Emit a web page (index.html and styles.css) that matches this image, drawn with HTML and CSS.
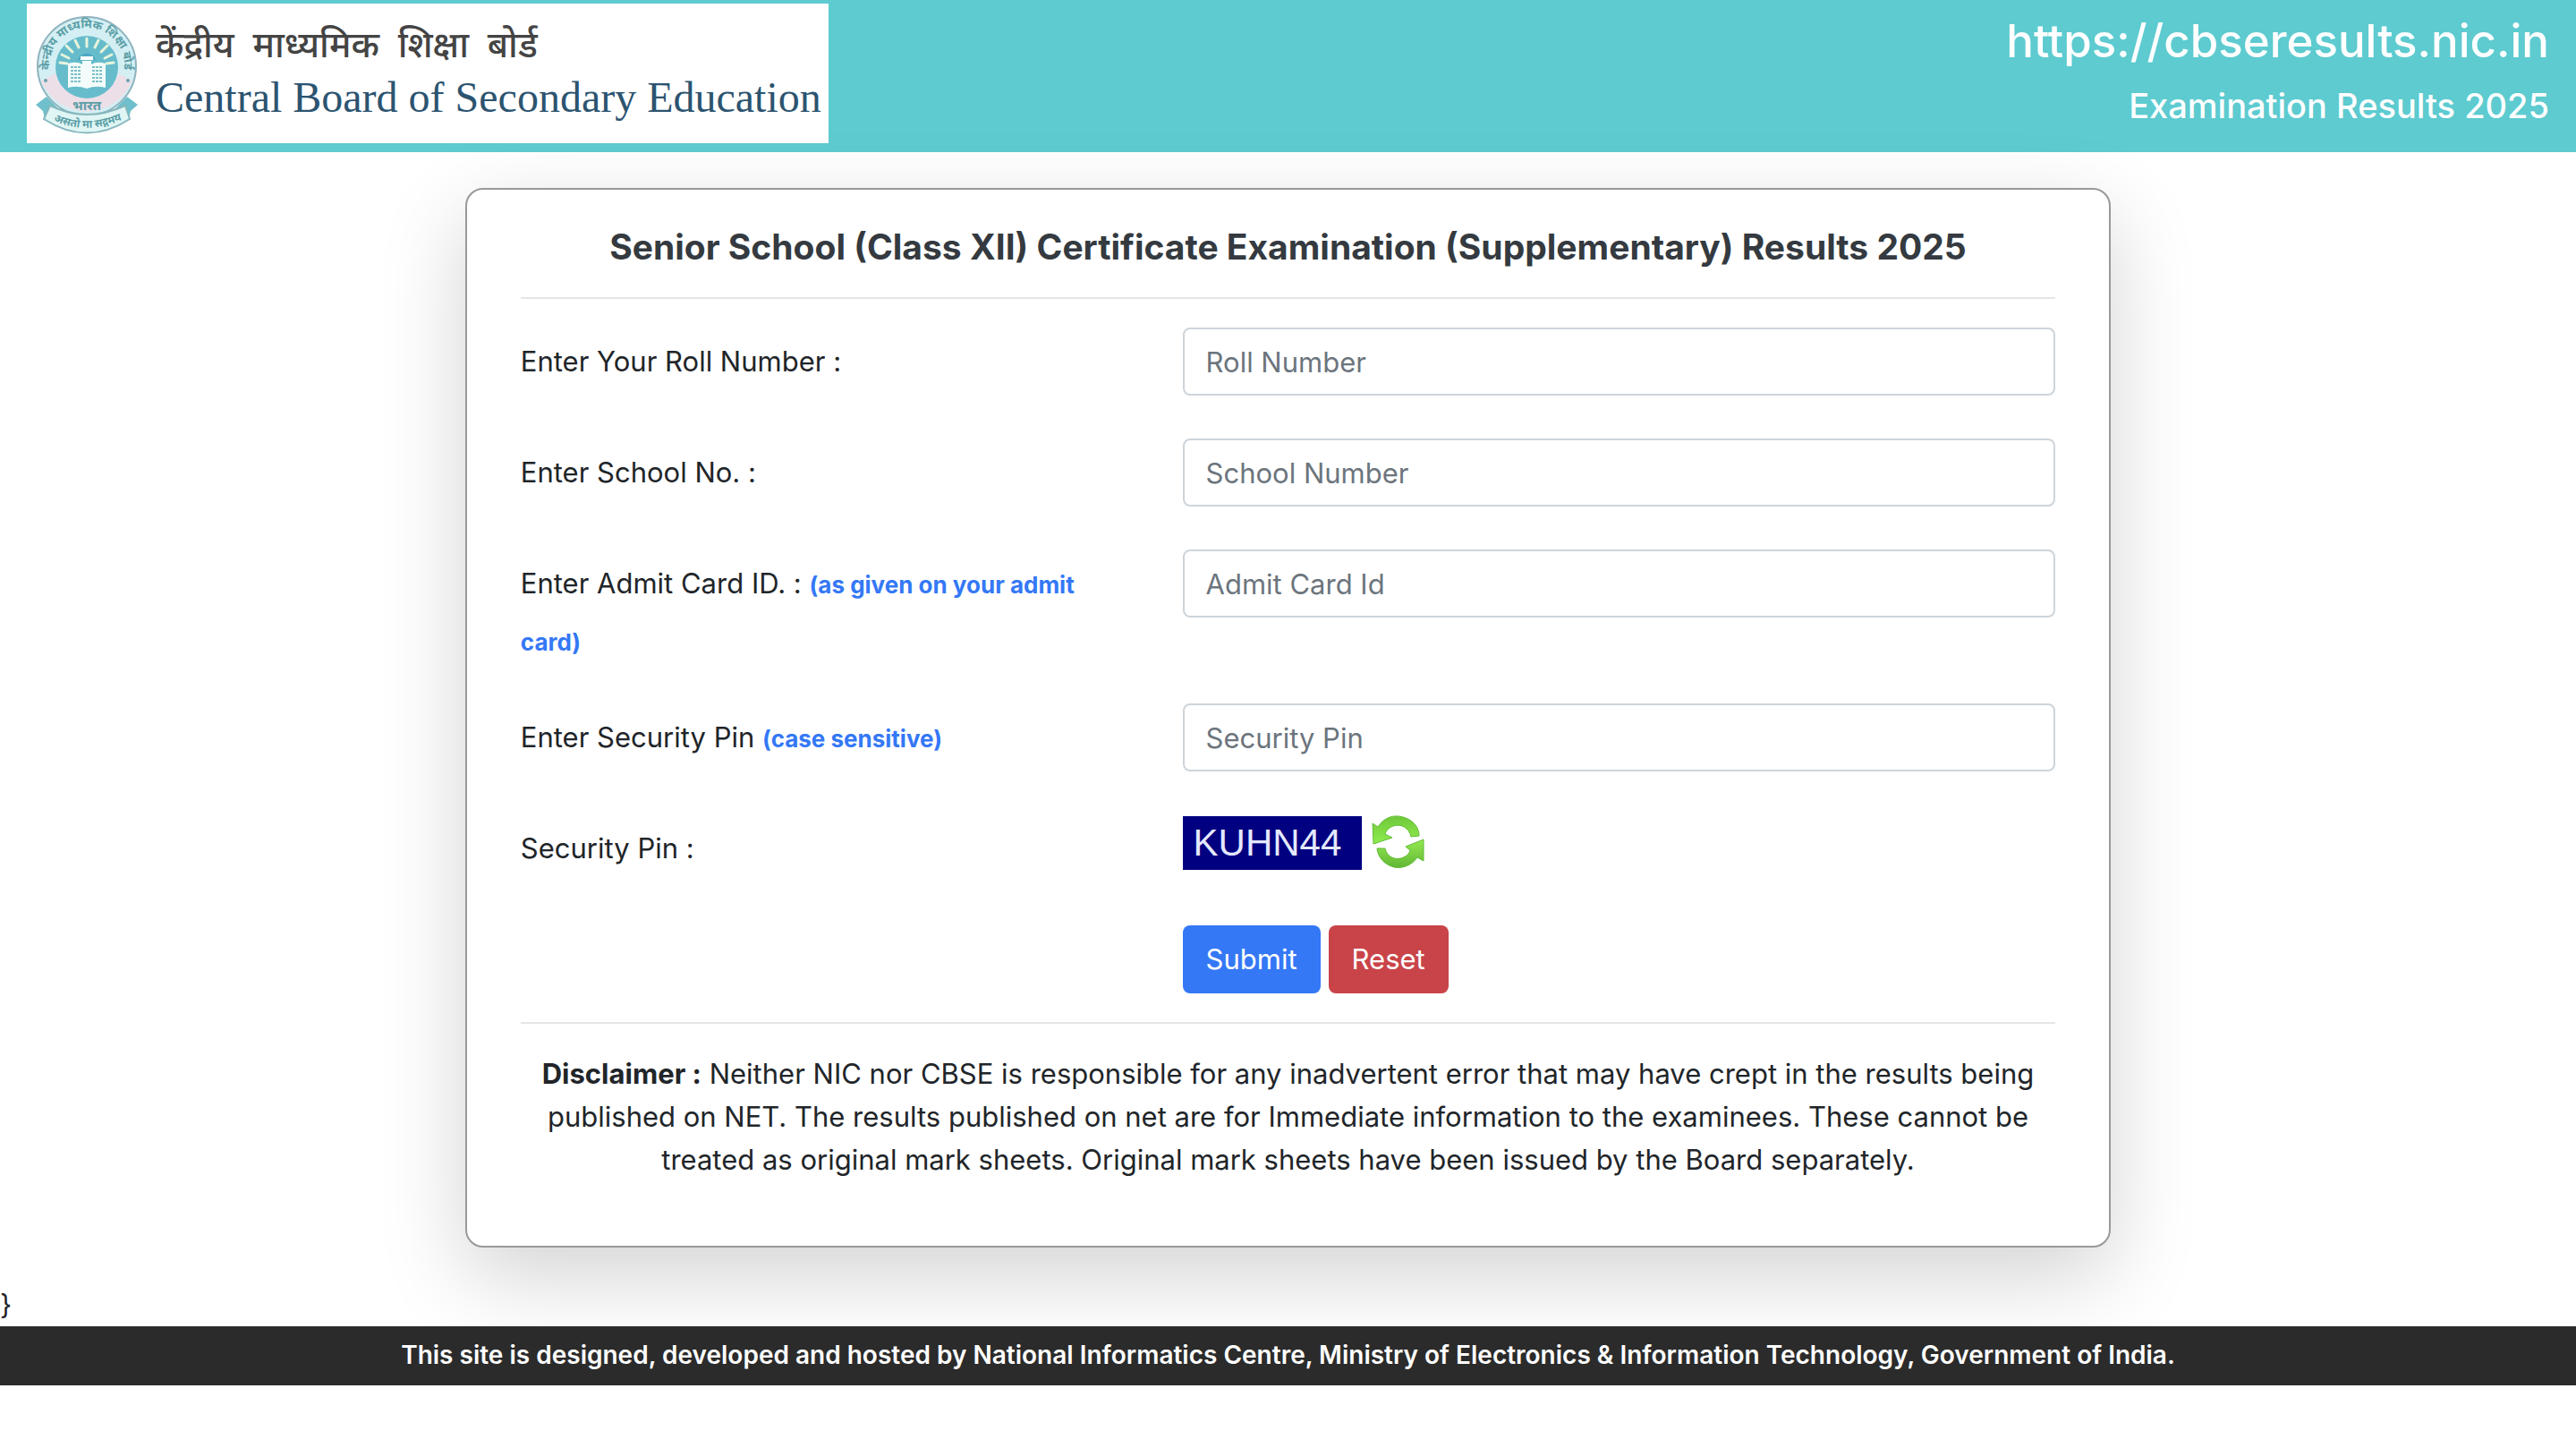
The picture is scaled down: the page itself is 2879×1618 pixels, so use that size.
FILE: index.html
```html
<!DOCTYPE html>
<html lang="en">
<head>
<meta charset="utf-8">
<meta name="viewport" content="width=device-width, initial-scale=1">
<title>CBSE Examination Results 2025</title>
<link rel="stylesheet" href="styles.css">
</head>
<body>
<header class="site-header">
  <div class="logo">
    <svg class="emblem" viewBox="36 10 124 146" role="img" aria-label="CBSE emblem">
      <path d="M52 108 L40 117 L48 124 L50 133 L66 122 Z M142 108 L154 117 L146 124 L144 133 L128 122 Z" fill="#6fc0cc"/>
      <circle cx="97" cy="74" r="55" fill="#d3eff4" stroke="#8fb3bf" stroke-width="2"/>
      <path d="M46 90 A55 55 0 0 0 148 90 L132 82 A36 36 0 0 1 62 82 Z" fill="#eddfe8"/>
      <circle cx="97" cy="75" r="35" fill="#67bccb"/>
      <g stroke="#e6f4dc" stroke-width="3" stroke-linecap="round">
        <path d="M97 52V43 M88 53L84 45 M106 53L110 45 M81 58L74 51 M113 58L120 51 M77 65L69 61 M117 65L125 61 M75 71L67 70 M119 71L127 70"/>
      </g>
      <path d="M86 67 Q97 52 108 67 Z" fill="#4fa9c4"/>
      <path d="M90 63H104V67H90Z" fill="#fff"/>
      <path d="M76 71 Q86 68 92 72 V68 H102 V72 Q108 68 118 71 V98 Q107 95 97 99 Q87 95 76 98 Z" fill="#f3fcfa"/>
      <g stroke="#7dbfc6" stroke-width="2" stroke-dasharray="3 1">
        <path d="M79 75H91 M79 79H91 M79 83H91 M79 87H91 M79 91H91 M103 75H115 M103 79H115 M103 83H115 M103 87H115 M103 91H115"/>
      </g>
      <path id="ring" d="M57 86 A42 42 0 1 1 137 86" fill="none"/>
      <text class="emblem-ring"><textPath href="#ring" startOffset="50%" text-anchor="middle">केन्द्रीय माध्यमिक शिक्षा बोर्ड</textPath></text>
      <circle cx="51" cy="90" r="2" fill="#6aa5ad"/>
      <circle cx="143" cy="90" r="2" fill="#6aa5ad"/>
      <text class="emblem-text" x="97" y="123" text-anchor="middle">भारत</text>
      <path d="M56 118 Q97 138 140 118 L145 133 Q97 164 49 133 Z" fill="#dff6f5" stroke="#86b7bd" stroke-width="2"/>
      <path id="band" d="M52 131 Q97 155 144 130" fill="none"/>
      <text class="emblem-motto"><textPath href="#band" startOffset="50%" text-anchor="middle">असतो मा सद्गमय</textPath></text>
    </svg>
    <div class="logo-names">
      <div class="logo-hindi" lang="hi">केंद्रीय&nbsp; माध्यमिक&nbsp; शिक्षा&nbsp; बोर्ड</div>
      <div class="logo-english">Central Board of Secondary Education</div>
    </div>
  </div>
  <div class="site-title">
    <h1>https://cbseresults.nic.in</h1>
    <h2>Examination Results 2025</h2>
  </div>
</header>

<main class="page">
  <section class="card">
    <h3 class="card-title">Senior School (Class XII) Certificate Examination (Supplementary) Results 2025</h3>
    <form class="form">
      <div class="row">
        <label for="roll">Enter Your Roll Number :</label>
        <input id="roll" type="text" placeholder="Roll Number">
      </div>
      <div class="row">
        <label for="school">Enter School No. :</label>
        <input id="school" type="text" placeholder="School Number">
      </div>
      <div class="row">
        <label for="admit">Enter Admit Card ID. : <small>(as given on your admit card)</small></label>
        <input id="admit" type="text" placeholder="Admit Card Id">
      </div>
      <div class="row">
        <label for="pin">Enter Security Pin <small>(case sensitive)</small></label>
        <input id="pin" type="text" placeholder="Security Pin">
      </div>
      <div class="row">
        <div class="label">Security Pin :</div>
        <div class="captcha">
          <span class="captcha-code">KUHN44</span>
          <button class="refresh" type="button" aria-label="Get a new pin">
            <svg viewBox="0 0 64 64">
              <defs>
                <linearGradient id="top" x1="0" y1="0" x2="0" y2="1"><stop offset="0" stop-color="#6fc83a"/><stop offset="1" stop-color="#8fec4e"/></linearGradient>
                <linearGradient id="low" x1="0" y1="0" x2="0" y2="1"><stop offset="0" stop-color="#93ea50"/><stop offset="1" stop-color="#62b735"/></linearGradient>
              </defs>
              <path d="M4 10 L10 14 C17 3 28 0 38 3 C49 6 56 14 56 24 L47 25 C45 15 36 10 27 13 C22 15 19 18 18 22 L26 26 L5 33 Z" fill="url(#top)" stroke="#62bd35" stroke-width="1"/>
              <path d="M61 28 L61 52 L54 48 C48 57 37 61 28 59 C17 56 10 48 9 38 L18 38 C20 47 28 51 36 49 C42 47 45 44 46 40 L41 36 Z" fill="url(#low)" stroke="#62bd35" stroke-width="1"/>
            </svg>
          </button>
        </div>
      </div>
      <div class="row actions-row">
        <div class="actions">
          <button class="btn btn-primary" type="submit">Submit</button>
          <button class="btn btn-danger" type="reset">Reset</button>
        </div>
      </div>
    </form>
    <p class="disclaimer"><strong>Disclaimer :</strong> Neither NIC nor CBSE is responsible for any inadvertent error that may have crept in the results being published on NET. The results published on net are for Immediate information to the examinees. These cannot be treated as original mark sheets. Original mark sheets have been issued by the Board separately.</p>
  </section>
</main>
<div class="stray">}</div>
<footer class="site-footer">This site is designed, developed and hosted by National Informatics Centre, Ministry of Electronics &amp; Information Technology, Government of India.</footer>
</body>
</html>
```
FILE: styles.css
```css
* { box-sizing: border-box; }

body {
  margin: 0;
  background: #fff;
  color: #212529;
  font-family: Inter, "Liberation Sans", sans-serif;
  font-size: 31px;
  line-height: 48px;
}

h1, h2, h3, p { margin: 0; }

.site-header {
  display: flex;
  justify-content: space-between;
  align-items: flex-start;
  padding: 4px 30px 10px;
  background: #5dcbd0;
}

.logo {
  display: flex;
  align-items: flex-start;
  gap: 14px;
  width: 896px;
  height: 156px;
  padding: 6px 0 0 6px;
  background: #fff;
  white-space: nowrap;
}

.emblem { flex: none; width: 124px; height: 146px; }

.emblem-ring, .emblem-text, .emblem-motto {
  fill: #5a9ea6;
  font-family: "Noto Sans Devanagari", "Noto Sans", FreeSans, sans-serif;
  font-weight: 700;
}

.emblem-ring { font-size: 13px; }
.emblem-text { font-size: 15px; }
.emblem-motto { font-size: 12px; }

.logo-names { padding-top: 17px; }

.logo-hindi {
  color: #444;
  font-family: "Noto Sans Devanagari", "Noto Sans", FreeSans, sans-serif;
  font-size: 40px;
  font-weight: 500;
  line-height: 54px;
}

.logo-english {
  color: #2c5470;
  font-family: "Liberation Serif", serif;
  font-size: 48px;
  line-height: 56px;
}

.site-title {
  color: #fff;
  text-align: right;
}

.site-title h1 {
  padding-top: 8px;
  font-size: 51px;
  font-weight: 500;
  line-height: 68px;
}

.site-title h2 {
  padding-top: 14px;
  font-size: 38px;
  font-weight: 500;
  line-height: 48px;
}

.page {
  width: 66.6667%;
  margin: 0 auto;
  padding: 40px;
}

.card {
  padding: 40px 60px 72px;
  border: 2px solid #999;
  border-radius: 20px;
  background: #fff;
  box-shadow: 0 32px 96px rgba(0, 0, 0, 0.175);
}

.card-title {
  padding-bottom: 32px;
  color: #343a40;
  font-size: 39px;
  font-weight: 650;
  line-height: 48px;
  text-align: center;
}

.form {
  padding: 32px 0;
  border: solid #e5e5e5;
  border-width: 2px 0;
}

.row {
  display: grid;
  grid-template-columns: 680fr 976fr;
  column-gap: 60px;
  align-items: start;
  min-height: 124px;
  padding-bottom: 38px;
}

.row label, .row .label {
  padding-top: 6px;
  line-height: 64px;
}

.row small {
  color: #3478f6;
  font-size: 26px;
  font-weight: 700;
  line-height: 48px;
}

.row input {
  width: 100%;
  height: 76px;
  padding: 12px 24px;
  border: 2px solid #ced4da;
  border-radius: 8px;
  background: #fff;
  color: #495057;
  font: inherit;
}

.row input::placeholder { color: #6c757d; opacity: 1; }

.captcha {
  display: flex;
  align-items: center;
  gap: 8px;
}

.captcha-code {
  width: 200px;
  padding-left: 12px;
  background: #000080;
  color: #e4e8ff;
  font-family: "Liberation Sans", Arial, sans-serif;
  font-size: 42px;
  line-height: 60px;
}

.refresh {
  width: 64px;
  height: 64px;
  padding: 0;
  border: 0;
  background: none;
}

.refresh svg { display: block; }

.actions-row {
  min-height: 76px;
  padding-bottom: 0;
}

.actions {
  display: flex;
  grid-column: 2;
  gap: 9px;
}

.btn {
  height: 76px;
  padding: 12px 26px;
  border: 0;
  border-radius: 8px;
  color: #fff;
  font: inherit;
}

.btn-primary { background: #3478f6; }
.btn-danger { background: #c94449; }

.disclaimer {
  padding-top: 32px;
  text-align: center;
}

.site-footer {
  padding: 8px 0 10px;
  background: #2b2b2b;
  color: #fff;
  font-size: 28px;
  font-weight: 600;
  text-align: center;
}
```
